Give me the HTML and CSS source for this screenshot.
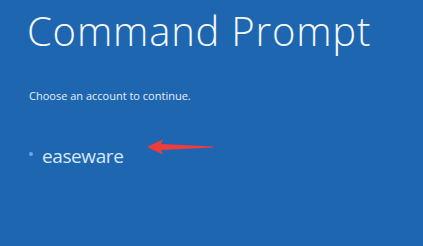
FILE: index.html
```html
<!DOCTYPE html>
<html>
<head>
<meta charset="utf-8">
<link rel="stylesheet" href="styles.css">
</head>
<body>
<div class="screen">
  <h1 class="title">Command Prompt</h1>
  <p class="subtitle">Choose an account to continue.</p>
  <div class="account">
    <span class="bullet"></span>
    <span class="name">easeware</span>
    <svg class="arrow" width="68" height="16" viewBox="0 0 68 16">
      <path d="M0 8 L16 0.5 L14 5 L66 7.5 L66 8.5 L14 11 L16 15.5 Z" fill="#f23b3b"/>
    </svg>
  </div>
</div>
</body>
</html>
```
FILE: styles.css
```css
html, body {
  margin: 0;
  padding: 0;
  background: #1f66b1;
}
.screen {
  width: 423px;
  height: 246px;
  box-sizing: border-box;
  padding: 7px 0 0 27px;
  background: #1f66b1;
  font-family: "Open Sans", "Noto Sans", sans-serif;
  color: #f4f8fc;
}
.title {
  margin: 0;
  font-weight: 300;
  font-size: 40px;
  line-height: 48px;
  letter-spacing: 0.8px;
}
.subtitle {
  margin: 34px 0 0 2px;
  font-size: 11px;
  line-height: 14px;
  color: #e6eef8;
}
.account {
  position: relative;
  display: flex;
  align-items: flex-start;
  margin: 41px 0 0 2px;
  height: 24px;
}
.bullet {
  width: 4px;
  height: 4px;
  margin-top: 8px;
  border-radius: 50%;
  background: #5aaeea;
  margin-right: 9px;
}
.name {
  font-size: 19px;
  line-height: 24px;
  letter-spacing: -0.4px;
  color: #d6e8fa;
}
.arrow {
  position: absolute;
  left: 118px;
  top: -5px;
}
```
